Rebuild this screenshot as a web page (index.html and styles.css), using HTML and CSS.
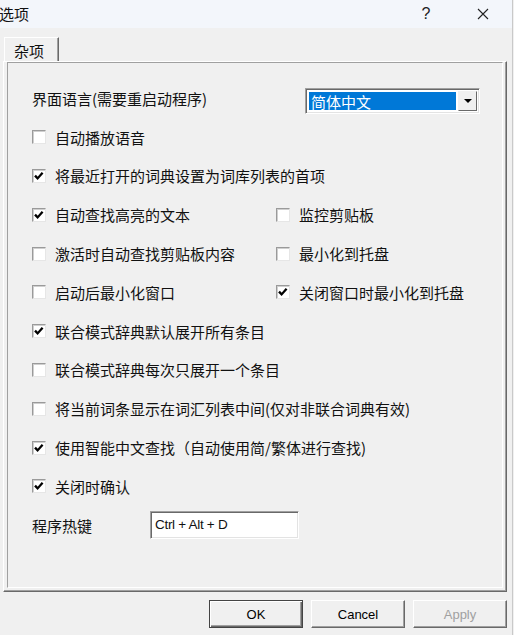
FILE: index.html
```html
<!DOCTYPE html>
<html lang="zh-CN">
<head>
    <meta charset="UTF-8">
    <meta name="viewport" content="width=device-width, initial-scale=1.0">
    <title>选项</title>
    <link rel="stylesheet" href="styles.css">
</head>
<body>

<div class="dialog">
    <div class="titlebar">
        <span class="title">选项</span>
        <span class="help">?</span>
        <span class="close">
            <svg width="12" height="12" viewBox="0 0 12 12"><path d="M1 1 L11 11 M11 1 L1 11" stroke="#222" stroke-width="1.1" fill="none"/></svg>
        </span>
    </div>

    <div class="body">
        <div class="tabs">
            <div class="tab">杂项</div>
        </div>

        <div class="panel">
            <div class="panel-inner">
                <div class="row">
                    <span>界面语言(需要重启动程序)</span>
                    <div class="combo">
                        <div class="combo-value">简体中文</div>
                        <div class="combo-btn"><span class="arrow"></span></div>
                    </div>
                </div>

                <div class="row"><label class="check"><span class="box"></span>自动播放语音</label></div>
                <div class="row"><label class="check"><span class="box on"></span>将最近打开的词典设置为词库列表的首项</label></div>

                <div class="row two">
                    <label class="check"><span class="box on"></span>自动查找高亮的文本</label>
                    <label class="check"><span class="box"></span>监控剪贴板</label>
                </div>
                <div class="row two">
                    <label class="check"><span class="box"></span>激活时自动查找剪贴板内容</label>
                    <label class="check"><span class="box"></span>最小化到托盘</label>
                </div>
                <div class="row two">
                    <label class="check"><span class="box"></span>启动后最小化窗口</label>
                    <label class="check"><span class="box on"></span>关闭窗口时最小化到托盘</label>
                </div>

                <div class="row"><label class="check"><span class="box on"></span>联合模式辞典默认展开所有条目</label></div>
                <div class="row"><label class="check"><span class="box"></span>联合模式辞典每次只展开一个条目</label></div>
                <div class="row"><label class="check"><span class="box"></span>将当前词条显示在词汇列表中间(仅对非联合词典有效)</label></div>
                <div class="row"><label class="check"><span class="box on"></span>使用智能中文查找（自动使用简/繁体进行查找)</label></div>
                <div class="row"><label class="check"><span class="box on"></span>关闭时确认</label></div>

                <div class="row">
                    <span class="hotkey-label">程序热键</span>
                    <div class="hotkey">Ctrl + Alt + D</div>
                </div>
            </div>
        </div>

        <div class="buttons">
            <button class="btn default">OK</button>
            <button class="btn">Cancel</button>
            <button class="btn" disabled>Apply</button>
        </div>
    </div>
</div>

</body>
</html>
```

FILE: styles.css
```css
html {
    background: #f0f0f0;
}
body {
    margin: 0;
    font-family: "Noto Sans CJK SC", "Noto Sans", sans-serif;
    font-size: 15px;
    color: #111;
}
.dialog {
    width: 512px;
    height: 635px;
    border-right: 1px solid #c9c9c9;
    background: #f0f0f0;
}
.titlebar {
    height: 28px;
    background: #f3f6fb;
    display: flex;
    align-items: center;
}
.title {
    margin-left: -1px;
    flex: 1;
    line-height: 24px;
}
.help {
    width: 12px;
    text-align: center;
    margin-right: 45px;
    font-family: "Liberation Sans", sans-serif;
    font-size: 16px;
    color: #222;
}
.close {
    display: flex;
    margin-right: 23px;
}

/* tab + panel */
.body {
    padding-left: 3px;
}
.tabs {
    margin-top: 9px;
    display: flex;
}
.tab {
    margin-left: 1px;
    width: 55px;
    height: 24px;
    box-sizing: border-box;
    border-top: 1px solid #fff;
    border-left: 1px solid #fff;
    border-right: 1px solid #696969;
    box-shadow: inset -1px 0 0 #a0a0a0;
    padding-left: 9px;
    line-height: 26px;
    position: relative;
    z-index: 1;
    background: #f0f0f0;
}
.panel {
    width: 504px;
    height: 531px;
    box-sizing: border-box;
    border: 1px solid;
    border-color: #fff #696969 #696969 #fff;
    box-shadow: inset -1px -1px 0 #a0a0a0;
    padding: 0 3px 3px 3px;
}
.panel-inner {
    height: 100%;
    box-sizing: border-box;
    border: 1px solid;
    border-color: #a0a0a0 #fff #fff #a0a0a0;
    padding: 16px 0 0 24px;
}
.row {
    height: 38.8px;
    display: flex;
    align-items: center;
}
.row.two {
    display: grid;
    grid-template-columns: 244px 1fr;
    align-items: center;
}
.check {
    display: flex;
    align-items: center;
    white-space: nowrap;
}
.box {
    width: 14px;
    height: 14px;
    box-sizing: border-box;
    border: 1px solid;
    border-color: #9a9a9a #e6e6e6 #e6e6e6 #9a9a9a;
    box-shadow: inset 1px 1px 0 #cfcfcf;
    background: #fff;
    margin-right: 9px;
}
.box.on {
    background: #fff url("data:image/svg+xml;utf8,<svg xmlns='http://www.w3.org/2000/svg' width='12' height='12' viewBox='0 0 12 12'><path d='M2 5.6 L4.6 8.4 L9.6 2.8' stroke='black' stroke-width='2.3' fill='none'/></svg>") no-repeat center;
}

/* language combo */
.combo {
    margin-left: auto;
    margin-right: 22px;
    margin-top: 6px;
    width: 175px;
    height: 26px;
    box-sizing: border-box;
    border: 1px solid;
    border-color: #a0a0a0 #fff #fff #a0a0a0;
    box-shadow: inset 1px 1px 0 #696969, inset -1px -1px 0 #e3e3e3;
    background: #fff;
    display: flex;
    padding: 2px;
}
.combo-value {
    flex: 1;
    background: #0078d7;
    color: #fff;
    line-height: 19px;
    padding-left: 2px;
    margin: 1px 2px 1px 1px;
}
.combo-btn {
    width: 19px;
    box-sizing: border-box;
    border: 1px solid;
    border-color: #f0f0f0 #696969 #696969 #f0f0f0;
    background: #f0f0f0;
    display: flex;
    align-items: center;
    justify-content: center;
}
.arrow {
    width: 0;
    height: 0;
    border-left: 4px solid transparent;
    border-right: 4px solid transparent;
    border-top: 4px solid #000;
}

/* hotkey */
.hotkey-label {
    width: 118px;
}
.hotkey {
    width: 149px;
    height: 28px;
    box-sizing: border-box;
    border: 1px solid;
    border-color: #a0a0a0 #fff #fff #a0a0a0;
    box-shadow: inset 1px 1px 0 #696969, inset -1px -1px 0 #e3e3e3;
    background: #fff;
    font-family: "Liberation Sans", sans-serif;
    font-size: 13.5px;
    letter-spacing: -0.3px;
    padding-left: 4px;
    line-height: 26px;
}

/* dialog buttons */
.buttons {
    display: flex;
    justify-content: flex-end;
    gap: 8px;
    padding-right: 5px;
    margin-top: 8px;
}
.btn {
    width: 94px;
    height: 28px;
    border: 1px solid;
    border-color: #fff #696969 #696969 #fff;
    box-shadow: inset -1px -1px 0 #a0a0a0;
    background: #f0f0f0;
    font-family: "Liberation Sans", sans-serif;
    font-size: 13px;
    color: #000;
    padding: 0;
}
.btn.default {
    border-color: #444;
    box-shadow: inset 1px 1px 0 #fff, inset -1px -1px 0 #696969, inset -2px -2px 0 #a0a0a0;
}
.btn:disabled {
    color: #a0a0a0;
}
```
